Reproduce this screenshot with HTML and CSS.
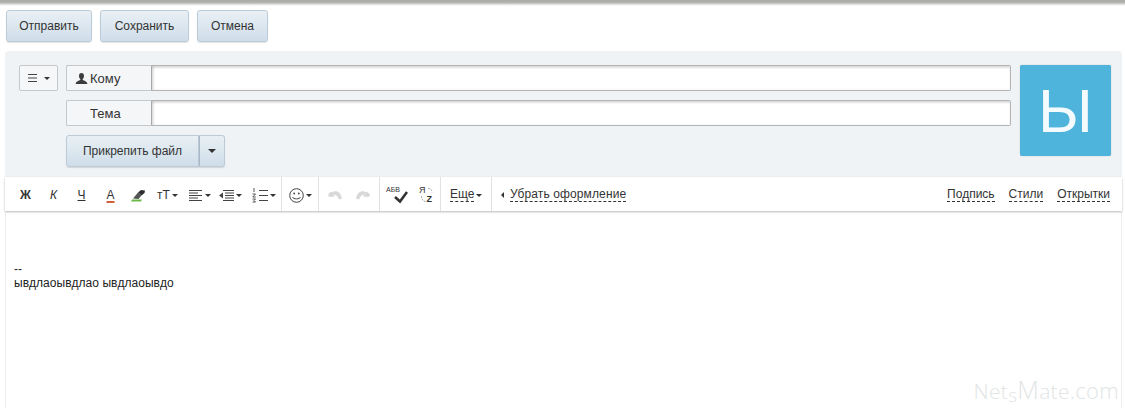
FILE: index.html
```html
<!DOCTYPE html>
<html lang="ru">
<head>
<meta charset="utf-8">
<title>Письмо</title>
<link rel="stylesheet" href="styles.css">
</head>
<body>
<div class="topshade"></div>
<div class="actions">
  <button class="btn btn-send">Отправить</button>
  <button class="btn btn-save">Сохранить</button>
  <button class="btn btn-cancel">Отмена</button>
</div>
<main class="compose">
  <section class="head">
    <button class="menu-btn">
      <svg width="10" height="8" viewBox="0 0 10 8"><path d="M0 .5h9M0 4h9M0 7.5h9" stroke="#444" fill="none"/></svg>
      <span class="caret"></span>
    </button>
    <div class="fields">
      <div class="field">
        <div class="label label-to">
          <svg width="13" height="11" viewBox="0 0 13 11"><path d="M6.5 0C8.2 0 9 1.300 9 3c0 1.500-.7 2.500-1.300 3v1c1.500.6 4.300 1.300 4.800 4H.5c.5-2.700 3.300-3.400 4.800-4V6C4.700 5.500 4 4.500 4 3c0-1.700.8-3 2.500-3z" fill="#3c3c3c"/></svg>
          <span>Кому</span>
        </div>
        <div class="input"></div>
      </div>
      <div class="field">
        <div class="label label-subj">Тема</div>
        <div class="input"></div>
      </div>
      <div class="attach">
        <button class="attach-main">Прикрепить файл</button>
        <button class="attach-arrow"><span class="caret caret-big"></span></button>
      </div>
    </div>
    <div class="avatar">Ы</div>
  </section>
  <nav class="toolbar">
    <div class="tgroup tgroup-fmt">
      <span class="ti ti-b">Ж</span>
      <span class="ti ti-i">К</span>
      <span class="ti ti-u">Ч</span>
      <span class="ti ti-c">А</span>
      <span class="ti ti-m">
        <svg width="15" height="13" viewBox="0 0 15 13"><path d="M2 9.500l5-6 3.500 3-3 3.500z" fill="#555"/><path d="M7 3.500L10 1l4 .5-.5 2.500-3 2.500z" fill="#2f2f2f"/><path d="M1 10.500h10l-1 2H0z" fill="#6cb84a"/></svg>
      </span>
      <span class="ti ti-size">тТ<i class="caret caret-s"></i></span>
      <span class="ti ti-icon">
        <svg width="14" height="11" viewBox="0 0 14 11"><path d="M0 .5h13M0 3h9M0 5.500h13M0 8h9M0 10.500h13" stroke="#444" fill="none"/></svg><i class="caret caret-s"></i>
      </span>
      <span class="ti ti-icon">
        <svg width="15" height="11" viewBox="0 0 15 11"><path d="M4 .5h11M6 3h9M6 5.500h9M6 8h9M4 10.500h11" stroke="#444" fill="none"/><path d="M4 2.500v6L0 5.500z" fill="#444"/></svg><i class="caret caret-s"></i>
      </span>
      <span class="ti ti-list">
        <svg width="16" height="15" viewBox="0 0 16 15"><path d="M7 2.500h9M7 7.500h9M7 12.500h9" stroke="#444" fill="none"/><path d="M2 0v4M.5 6h3L.8 9h3M.5 11h3l-1.500 1.500 1.500 1.500H.5" stroke="#444" fill="none" stroke-width=".9"/></svg><i class="caret caret-s"></i>
      </span>
    </div>
    <div class="tgroup tgroup-emoji">
      <svg width="15" height="15" viewBox="0 0 15 15"><circle cx="7.500" cy="7.500" r="6.800" fill="none" stroke="#444"/><circle cx="5.200" cy="5.500" r=".9" fill="#444"/><circle cx="9.800" cy="5.500" r=".9" fill="#444"/><path d="M3.500 9c1 2.500 7 2.500 8 0" fill="none" stroke="#444"/></svg><i class="caret caret-s"></i>
    </div>
    <div class="tgroup tgroup-undo">
      <svg width="14" height="10" viewBox="0 0 14 10"><path d="M0 4.500l3-3 1 1C6.500.5 12 0 14 8.500l-3 1C10 6 7.500 4.500 5.500 4.500l1.500 2-6 .5z" fill="#d8d8d8"/></svg>
      <svg class="redo" width="14" height="10" viewBox="0 0 14 10"><path d="M0 4.500l3-3 1 1C6.500.5 12 0 14 8.500l-3 1C10 6 7.500 4.500 5.500 4.500l1.500 2-6 .5z" fill="#d8d8d8"/></svg>
    </div>
    <div class="tgroup tgroup-spell">
      <span class="spell">
        <span class="spell-abv">АБВ</span>
        <svg class="spell-check" width="14" height="13" viewBox="0 0 14 13"><path d="M1 6l5 4.500L13 1" fill="none" stroke="#333" stroke-width="2.600"/></svg>
      </span>
      <span class="translit">
        <span class="tr-ya">Я</span>
        <span class="tr-z">Z</span>
        <svg class="tr-arc" width="13" height="17" viewBox="0 0 13 17"><path d="M8 1.500c3 0 4 1.500 4 4M1.500 9c0 3 1 5 4 5.500" fill="none" stroke="#aaa" stroke-dasharray="2 1"/></svg>
      </span>
    </div>
    <div class="tgroup tgroup-more">
      <span class="dash">Еще</span><i class="caret caret-s"></i>
    </div>
    <div class="tgroup-clear">
      <i class="caret-left"></i><span class="dash dash-clear">Убрать оформление</span>
    </div>
    <div class="tools-right">
      <span class="dash">Подпись</span>
      <span class="dash">Стили</span>
      <span class="dash">Открытки</span>
    </div>
  </nav>
  <article class="editor">
    <p>--</p>
    <p>ывдлаоывдлао ывдлаоывдо</p>
  </article>
</main>
<div class="watermark">Net<span class="wm-s">s</span><span class="wm-m">M</span>ate<span class="wm-dom">.com</span></div>
</body>
</html>
```
FILE: styles.css
```css
* { box-sizing: border-box; }
html, body { margin: 0; height: 408px; overflow: hidden; }
body {
  background: #fff;
  font-family: "Liberation Sans", Arial, sans-serif;
  font-size: 12px;
  color: #333;
  position: relative;
}
button { font-family: inherit; margin: 0; padding: 0; color: #333; }
.topshade {
  height: 6px;
  background: linear-gradient(#a9a9a5 0, #b4b4b0 45%, #e4e4e2 75%, #fff 100%);
}
.actions { display: flex; gap: 8px; padding: 4px 0 0 6px; height: 45px; }
.btn {
  height: 32px;
  border: 1px solid #bccbd8;
  border-radius: 3px;
  background: linear-gradient(#e9f0f5, #cfdde9);
  font-size: 12px;
  box-shadow: 0 1px 1px rgba(0,0,0,.12);
}
.btn-send { width: 86px; }
.btn-save { width: 89px; }
.btn-cancel { width: 71px; }

.compose { margin: 0 3px 0 5px; }
.head {
  height: 126px;
  background: #f0f3f6;
  border-radius: 4px 4px 0 0;
  padding: 14px 11px 0 14px;
  display: flex;
  align-items: flex-start;
}
.menu-btn {
  width: 39px;
  height: 26px;
  border: 1px solid #c4c8cb;
  border-radius: 2px;
  background: #f6f7f8;
  display: flex;
  align-items: center;
  justify-content: center;
  gap: 6px;
  margin-right: 8px;
}
.caret {
  display: inline-block;
  border: 3px solid transparent;
  border-top: 3px solid #333;
  border-bottom: 0;
  width: 0;
  height: 0;
}
.caret-big { border-width: 4px 4px 0; }
.caret-s { border-width: 3px 3px 0; margin-left: 2px; vertical-align: middle; }
.fields { flex: 1; display: flex; flex-direction: column; gap: 9px; }
.field { display: flex; height: 26px; }
.label {
  width: 85px;
  flex: none;
  background: #f5f6f7;
  border: 1px solid #c4c8cb;
  border-right: 0;
  border-radius: 2px 0 0 2px;
  display: flex;
  align-items: center;
  font-size: 13px;
  color: #333;
}
.label-to { padding-left: 8px; gap: 2px; }
.label-subj { padding-left: 23px; }
.input {
  flex: 1;
  background: #fff;
  border: 1px solid #b4b4b4;
  border-left: 1px solid #a8a8a8;
  border-radius: 0 2px 2px 0;
  box-shadow: inset 0 2px 2px rgba(0,0,0,.12), inset 2px 0 2px rgba(0,0,0,.1);
}
.attach { display: flex; height: 32px; }
.attach-main, .attach-arrow {
  border: 1px solid #bccbd8;
  background: linear-gradient(#e9f0f5, #cfdde9);
  font-size: 12px;
  box-shadow: 0 1px 1px rgba(0,0,0,.12);
}
.attach-main { width: 133px; border-radius: 3px 0 0 3px; }
.attach-arrow {
  width: 26px;
  border-left-color: #a9b9c7;
  border-radius: 0 3px 3px 0;
  display: flex;
  align-items: center;
  justify-content: center;
}
.avatar {
  width: 91px;
  height: 91px;
  margin-left: 9px;
  background: #4eb4dc;
  border-radius: 2px;
  color: #f4fbfe;
  font-size: 62px;
  line-height: 91px;
  text-align: center;
  box-shadow: 0 0 1px rgba(0,0,0,.35);
}

.toolbar {
  height: 34px;
  background: #fff;
  display: flex;
  align-items: stretch;
  box-shadow: 0 1px 2px rgba(0,0,0,.28);
  position: relative;
  padding-left: 6px;
  font-size: 12px;
}
.tgroup {
  display: flex;
  align-items: center;
  padding-top: 2px;
  border-right: 1px solid #e2e2e2;
}
.tgroup-fmt { width: 271px; }
.ti {
  width: 31px;
  flex: none;
  display: flex;
  align-items: center;
  justify-content: center;
  color: #333;
  font-size: 12px;
}
.ti-b { width: 29px; font-weight: bold; }
.ti-i { width: 27px; font-style: italic; }
.ti-u { width: 29px; text-decoration: underline; }
.ti-c { width: 29px; text-decoration: underline; text-decoration-color: #d0603a; text-decoration-thickness: 2px; text-underline-offset: 2px; }
.ti-m { width: 26px; }
.ti-size { width: 33px; font-size: 12px; }
.ti-icon { width: 31px; }
.ti-list { width: 35px; }
.tgroup-emoji { width: 37px; padding-left: 7px; }
.tgroup-undo { width: 61px; padding-left: 9px; gap: 14px; }
.redo { transform: scaleX(-1); }
.tgroup-spell { width: 61px; padding-left: 6px; gap: 9px; }
.spell { position: relative; width: 24px; height: 20px; display: block; }
.spell-abv { position: absolute; left: 0; top: 1px; font-size: 7px; line-height: 8px; color: #333; }
.spell-check { position: absolute; left: 8px; top: 6px; }
.translit { position: relative; width: 15px; height: 18px; display: block; }
.tr-ya { position: absolute; left: 0; top: 0; font-size: 9px; line-height: 9px; }
.tr-z { position: absolute; right: 2px; bottom: 0; font-size: 9px; line-height: 9px; font-weight: bold; }
.tr-arc { position: absolute; left: 1px; top: 1px; }
.tgroup-more { width: 51px; padding-left: 9px; }
.dash {
  color: #333;
  border-bottom: 1px dashed #333;
  line-height: 13px;
}
.dash-clear { letter-spacing: .12px; }
.tgroup-clear { display: flex; align-items: center; padding: 2px 0 0 9px; gap: 6px; }
.caret-left {
  width: 0; height: 0;
  border: 3px solid transparent;
  border-right: 3px solid #333;
  border-left: 0;
}
.tools-right {
  margin-left: auto;
  display: flex;
  align-items: center;
  gap: 14px;
  padding: 2px 12px 0 0;
}
.editor {
  height: 196px;
  margin-top: 1px;
  padding: 50px 8px 0;
  font-size: 12px;
  line-height: 14px;
  letter-spacing: .05px;
  color: #222;
  border-left: 1px solid #eee;
  border-right: 1px solid #eee;
}
.editor p { margin: 0; }
.watermark {
  position: absolute;
  right: 6px;
  bottom: 4px;
  font-size: 21px;
  line-height: 24px;
  letter-spacing: .3px;
  color: #dfe5e5;
  font-family: "Open Sans", sans-serif;
  font-weight: 300;
}
.wm-s { font-size: 19px; position: relative; top: 3px; }
.wm-m { font-size: 25px; }
.wm-dom { font-size: 22px; }
```
